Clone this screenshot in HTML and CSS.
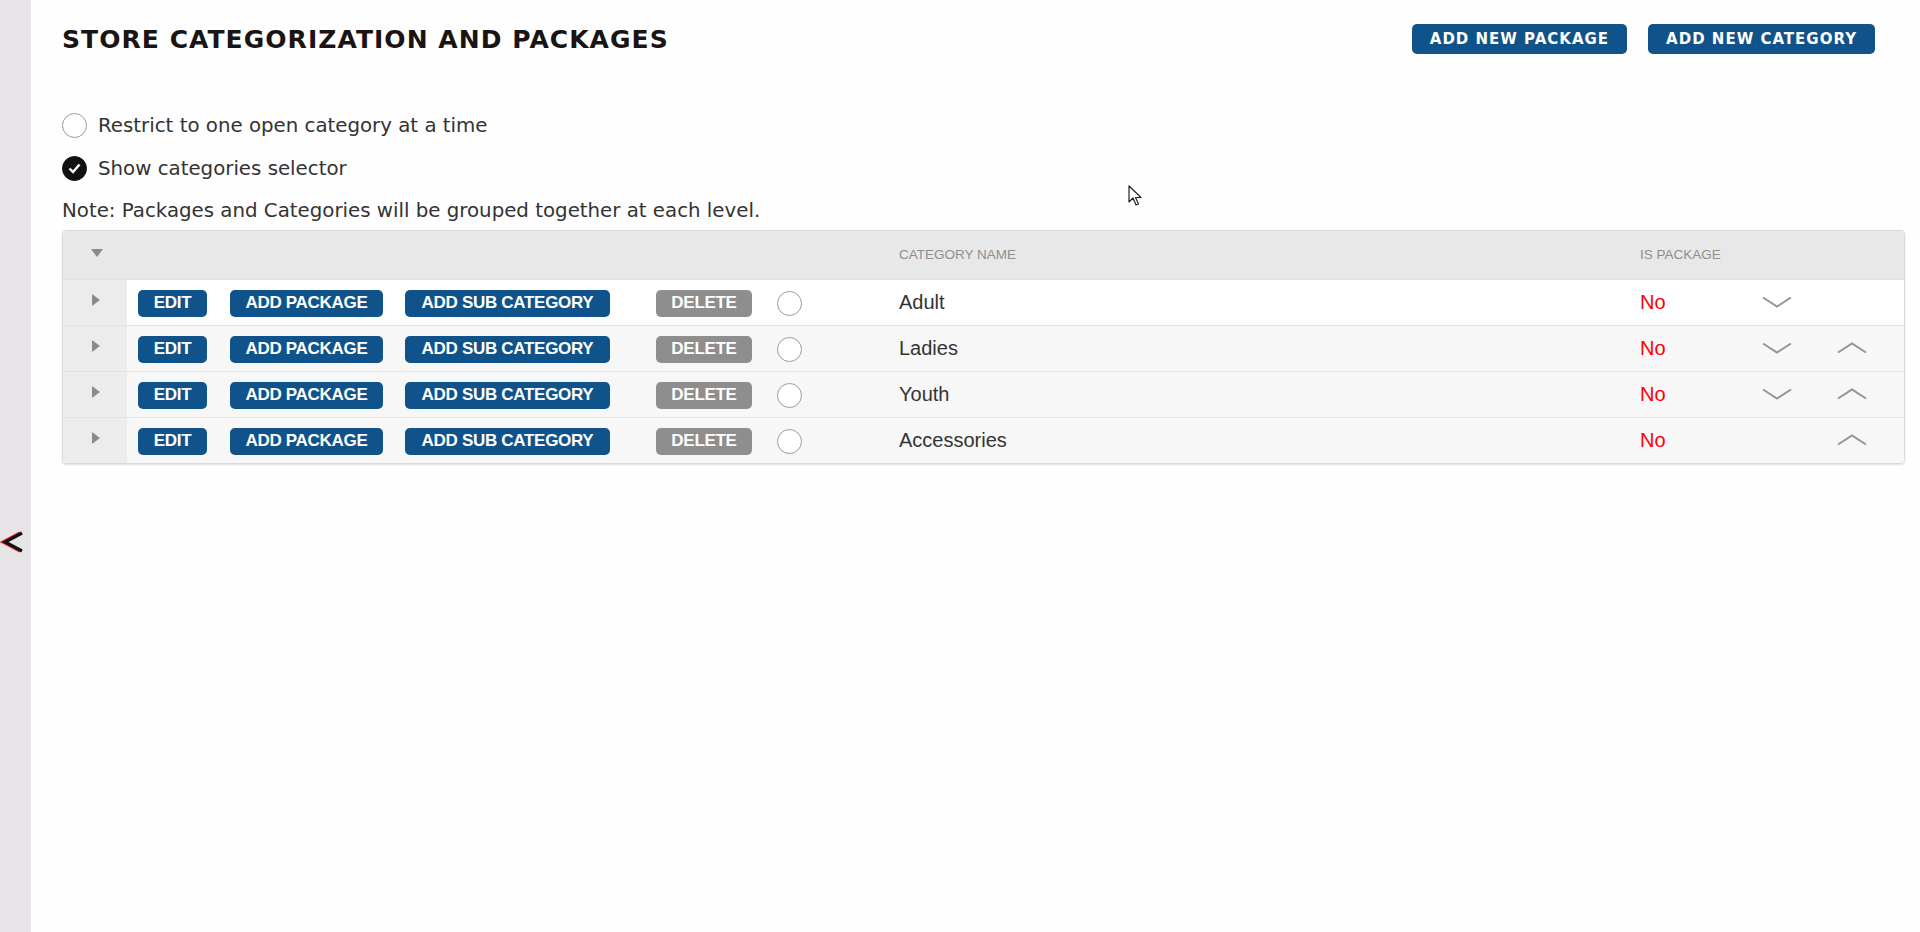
FILE: index.html
```html
<!DOCTYPE html>
<html lang="en">
<head>
    <meta charset="UTF-8">
    <meta name="viewport" content="width=device-width, initial-scale=1.0">
    <title>Store Categorization and Packages</title>
    <link rel="stylesheet" href="styles.css">
</head>
<body>
    <div class="layout">
        <aside class="sidebar">
            <span class="collapse">
                <svg width="26" height="24" viewBox="0 0 26 24">
                    <polyline points="20,3 3,12 20,21" fill="none" stroke="#ff2a2a" stroke-width="3.4"/>
                    <polyline points="22,3 5,12 22,21" fill="none" stroke="#111" stroke-width="3.2"/>
                </svg>
            </span>
        </aside>
        <main class="content">
            <header class="topbar">
                <h1>STORE CATEGORIZATION AND PACKAGES</h1>
                <div class="top-actions">
                    <button class="btn-top">ADD NEW PACKAGE</button>
                    <button class="btn-top">ADD NEW CATEGORY</button>
                </div>
            </header>

            <div class="options">
                <label class="option">
                    <span class="radio"></span>
                    Restrict to one open category at a time
                </label>
                <label class="option">
                    <span class="radio checked">
                        <svg width="13" height="11" viewBox="0 0 13 11">
                            <polyline points="1.5,5.5 5,9 11.5,1.5" fill="none" stroke="#fff" stroke-width="2.4"/>
                        </svg>
                    </span>
                    Show categories selector
                </label>
            </div>
            <p class="note">Note: Packages and Categories will be grouped together at each level.</p>

            <div class="grid">
                <table>
                    <colgroup>
                        <col class="c-toggle">
                        <col class="c-actions">
                        <col class="c-name">
                        <col class="c-pkg">
                        <col class="c-down">
                        <col class="c-up">
                    </colgroup>
                    <thead>
                        <tr>
                            <th class="toggle">
                                <svg width="12" height="8" viewBox="0 0 12 8"><polygon points="0,0 12,0 6,8" fill="#8b8b8b"/></svg>
                            </th>
                            <th></th>
                            <th>CATEGORY NAME</th>
                            <th>IS PACKAGE</th>
                            <th></th>
                            <th></th>
                        </tr>
                    </thead>
                    <tbody id="rows"></tbody>
                </table>
            </div>
        </main>
    </div>

    <svg class="cursor" width="14" height="22" viewBox="0 0 14 22">
        <path d="M1,1 L1,17 L5,13 L8,20 L10.5,19 L7.5,12.5 L13,12.5 Z" fill="#fff" stroke="#222" stroke-width="1.2" stroke-linejoin="round"/>
    </svg>

    <script>
        const categories = ['Adult', 'Ladies', 'Youth', 'Accessories'];
        const tbody = document.getElementById('rows');

        const down = '<svg width="30" height="12" viewBox="0 0 30 12"><polyline points="1,1.5 15,10.5 29,1.5" fill="none" stroke="#949494" stroke-width="2"/></svg>';
        const up = '<svg width="30" height="12" viewBox="0 0 30 12"><polyline points="1,10.5 15,1.5 29,10.5" fill="none" stroke="#949494" stroke-width="2"/></svg>';

        categories.forEach(function (name, i) {
            const tr = document.createElement('tr');
            tr.innerHTML = `
                <td class="toggle"><svg width="8" height="12" viewBox="0 0 8 12"><polygon points="0,0 8,6 0,12" fill="#8b8b8b"/></svg></td>
                <td>
                    <div class="row-actions">
                        <button class="btn btn-edit">EDIT</button>
                        <button class="btn btn-pkg">ADD PACKAGE</button>
                        <button class="btn btn-sub">ADD SUB CATEGORY</button>
                        <button class="btn btn-delete">DELETE</button>
                        <span class="radio small"></span>
                    </div>
                </td>
                <td class="name">${name}</td>
                <td class="pkg">No</td>
                <td class="move">${i < categories.length - 1 ? down : ''}</td>
                <td class="move up">${i > 0 ? up : ''}</td>`;
            tbody.appendChild(tr);
        });
    </script>
</body>
</html>
```

FILE: styles.css
```css
body {
    margin: 0;
    padding: 0;
    background-color: #fefefe;
    font-family: "DejaVu Sans", Verdana, sans-serif;
    color: #222;
}

.layout {
    display: flex;
    min-height: 932px;
}

.sidebar {
    width: 31px;
    flex-shrink: 0;
    background-color: #e6e4e6;
    padding-top: 530px;
    box-sizing: border-box;
}

.collapse {
    display: block;
    margin-left: 0;
}

.content {
    flex: 1;
    padding: 0 15px 0 31px;
}

.topbar {
    display: flex;
    justify-content: space-between;
    align-items: center;
    padding-top: 24px;
    height: 30px;
}

.topbar h1 {
    margin: 0;
    font-size: 25px;
    font-weight: bold;
    letter-spacing: 1.05px;
    color: #1a1414;
}

.top-actions {
    display: flex;
    gap: 21px;
    margin-right: 30px;
}

.btn-top {
    height: 30px;
    padding: 0 18px;
    border: none;
    border-radius: 5px;
    background-color: #10538a;
    color: #fff;
    font-family: "DejaVu Sans", Verdana, sans-serif;
    font-size: 15px;
    font-weight: bold;
    letter-spacing: 1px;
    cursor: pointer;
}

.options {
    margin-top: 50px;
}

.option {
    display: flex;
    align-items: center;
    height: 43px;
    font-size: 19.8px;
    color: #333;
}

.radio {
    display: inline-flex;
    align-items: center;
    justify-content: center;
    width: 25px;
    height: 25px;
    box-sizing: border-box;
    border: 1.5px solid #9c9c9c;
    border-radius: 50%;
    background-color: #fff;
    margin-right: 11px;
    flex-shrink: 0;
}

.radio.checked {
    background-color: #111;
    border-color: #111;
}

.radio.small {
    margin: 0;
}

.note {
    margin: 10px 0 8px;
    line-height: 22px;
    font-size: 19.8px;
    color: #333;
}

.grid {
    border: 1px solid #dadada;
    border-radius: 4px;
    overflow: hidden;
    box-shadow: 0 1px 2px rgba(0, 0, 0, 0.12);
}

table {
    width: 100%;
    border-collapse: collapse;
    table-layout: fixed;
    font-family: "Liberation Sans", Arial, sans-serif;
}

.c-toggle { width: 64px; }
.c-actions { width: 760px; }
.c-pkg { width: 116px; }
.c-down { width: 65px; }
.c-up { width: 95px; }

thead tr {
    background-color: #e8e8e8;
    height: 48px;
}

th {
    text-align: left;
    font-size: 13.5px;
    font-weight: normal;
    color: #8e8e8e;
    padding: 0 12px;
}

tbody tr {
    height: 46px;
    border-top: 1px solid #e2e2e2;
    background-color: #fff;
}

tbody tr:nth-child(n+2) {
    background-color: #f7f7f7;
}

td {
    padding: 0 12px;
    font-size: 20px;
    color: #333;
}

.toggle {
    padding: 0 0 0 28px;
}

td.toggle {
    background-color: #ececec;
    padding-left: 29px;
}

.toggle svg {
    display: block;
    margin-top: -4px;
}

.row-actions {
    display: flex;
    align-items: center;
    margin-top: 2px;
}

.btn {
    height: 27px;
    padding: 0;
    border: none;
    border-radius: 5px;
    background-color: #10538a;
    color: #fff;
    font-family: "Liberation Sans", Arial, sans-serif;
    font-size: 17px;
    font-weight: bold;
    letter-spacing: -0.3px;
    cursor: pointer;
}

.btn-edit { width: 69px; margin-right: 23px; }
.btn-pkg { width: 153px; margin-right: 22px; }
.btn-sub { width: 205px; margin-right: 46px; }
.btn-delete { width: 96px; margin-right: 25px; background-color: #8e8e8e; }

tbody td:nth-child(2) {
    padding-left: 11px;
}

.pkg {
    color: #ff0000;
}

.move {
    padding: 0 0 0 18px;
}

.move.up {
    padding-left: 28px;
}

.move svg {
    display: block;
}

.cursor {
    position: absolute;
    left: 1128px;
    top: 185px;
}
```
